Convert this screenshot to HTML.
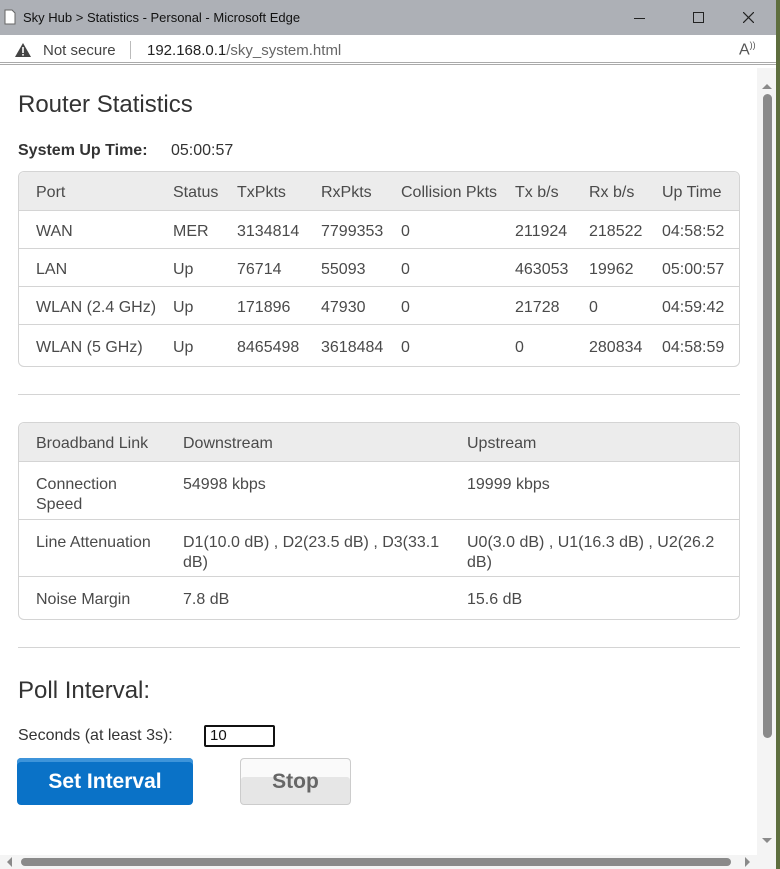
<!DOCTYPE html>
<html><head><style>
*{margin:0;padding:0;box-sizing:border-box}
body{width:780px;height:869px;overflow:hidden;background:#5e6e3e;font-family:"Liberation Sans",sans-serif;position:relative;color:#4a4a4a}
.win{position:absolute;left:0;top:0;width:776px;height:869px;background:#fff}
.title{position:absolute;left:0;top:0;width:776px;height:35px;background:#adb0b6;font-size:13px;color:#111}
.addr{position:absolute;left:0;top:35px;width:776px;height:30px;background:#fff;border-bottom:3px double #aaa}
.a{position:absolute}
table{border-collapse:separate;border-spacing:0;border:1px solid #d4d4d4;border-radius:6px;font-size:16px;color:#4a4a4a;position:absolute;left:18px;width:722px;table-layout:fixed}
td{padding:4px 0 0 0;border-top:1px solid #d4d4d4;vertical-align:middle;white-space:nowrap}
td:first-child{padding-left:17px}
tr:first-child td{border-top:none;background:#ececec}
tr:first-child td:first-child{border-top-left-radius:6px}
tr:first-child td:last-child{border-top-right-radius:6px}
.t2 td{white-space:normal}
.top td{vertical-align:top;padding-top:13px;line-height:20px}
hr{position:absolute;left:18px;width:722px;border:none;border-top:1px solid #d4d4d4}
</style></head><body>
<div class="win">
<div class="title">
<svg class="a" style="left:4px;top:9px" width="12" height="16"><path d="M1 1h7l3 3v11H1z" fill="#fff" stroke="#666"/></svg>
<span class="a" style="left:23px;top:10px">Sky Hub &gt; Statistics - Personal - Microsoft Edge</span>
<div class="a" style="left:634px;top:18px;width:11px;height:1px;background:#222"></div>
<div class="a" style="left:693px;top:12px;width:11px;height:11px;border:1px solid #222"></div>
<svg class="a" style="left:743px;top:12px" width="11" height="11"><path d="M0 0L11 11M11 0L0 11" stroke="#222" stroke-width="1.2"/></svg>
</div>
<div class="addr">
<svg class="a" style="left:14px;top:7px" width="18" height="16"><path d="M9 1L17 15H1z" fill="#444"/><rect x="8.2" y="5" width="1.6" height="6" fill="#fff"/><rect x="8.2" y="12" width="1.6" height="1.6" fill="#fff"/></svg>
<span class="a" style="left:43px;top:7px;font-size:15px;color:#444">Not secure</span>
<div class="a" style="left:130px;top:6px;width:1px;height:18px;background:#bbb"></div>
<span class="a" style="left:147px;top:7px;font-size:15px;color:#222">192.168.0.1<span style="color:#666">/sky_system.html</span></span>
<span class="a" style="left:739px;top:5px;font-size:16px;color:#555">A<sup style="font-size:9px">))</sup></span>
</div>
<div class="a" style="left:757px;top:68px;width:19px;height:790px;background:#f4f4f4"></div>
<div class="a" style="left:763px;top:94px;width:9px;height:644px;background:#8a8a8a;border-radius:5px"></div>
<div class="a" style="left:762px;top:79px;width:0;height:0;border:5px solid transparent;border-bottom-color:#8a8a8a"></div>
<div class="a" style="left:762px;top:838px;width:0;height:0;border:5px solid transparent;border-top-color:#8a8a8a"></div>
<div class="a" style="left:0;top:855px;width:776px;height:14px;background:#f4f4f4"></div>
<div class="a" style="left:21px;top:858px;width:710px;height:8px;background:#8a8a8a;border-radius:4px"></div>
<div class="a" style="left:2px;top:857px;border:5px solid transparent;border-right-color:#8a8a8a"></div>
<div class="a" style="left:745px;top:857px;border:5px solid transparent;border-left-color:#8a8a8a"></div>

<div class="a" style="left:18px;top:91px;font-size:24px;color:#333">Router Statistics</div>
<div class="a" style="left:18px;top:142px;font-size:16px;font-weight:bold;color:#333">System Up Time:</div>
<div class="a" style="left:171px;top:142px;font-size:16px;color:#333">05:00:57</div>

<table style="top:171px;height:195px">
<colgroup><col style="width:154px"><col style="width:64px"><col style="width:84px"><col style="width:80px"><col style="width:114px"><col style="width:74px"><col style="width:73px"><col></colgroup>
<tr style="height:38px"><td>Port</td><td>Status</td><td>TxPkts</td><td>RxPkts</td><td>Collision Pkts</td><td>Tx b/s</td><td>Rx b/s</td><td>Up Time</td></tr>
<tr style="height:38px"><td>WAN</td><td>MER</td><td>3134814</td><td>7799353</td><td>0</td><td>211924</td><td>218522</td><td>04:58:52</td></tr>
<tr style="height:38px"><td>LAN</td><td>Up</td><td>76714</td><td>55093</td><td>0</td><td>463053</td><td>19962</td><td>05:00:57</td></tr>
<tr style="height:38px"><td>WLAN (2.4 GHz)</td><td>Up</td><td>171896</td><td>47930</td><td>0</td><td>21728</td><td>0</td><td>04:59:42</td></tr>
<tr style="height:42px"><td>WLAN (5 GHz)</td><td>Up</td><td>8465498</td><td>3618484</td><td>0</td><td>0</td><td>280834</td><td>04:58:59</td></tr>
</table>
<hr style="top:394px">

<table class="t2" style="top:422px;height:197px">
<colgroup><col style="width:164px"><col style="width:284px"><col></colgroup>
<tr style="height:38px"><td>Broadband Link</td><td>Downstream</td><td>Upstream</td></tr>
<tr class="top" style="height:58px"><td>Connection<br>Speed</td><td>54998 kbps</td><td>19999 kbps</td></tr>
<tr class="top" style="height:57px"><td>Line Attenuation</td><td>D1(10.0 dB) , D2(23.5 dB) , D3(33.1 dB)</td><td>U0(3.0 dB) , U1(16.3 dB) , U2(26.2 dB)</td></tr>
<tr style="height:43px"><td>Noise Margin</td><td>7.8 dB</td><td>15.6 dB</td></tr>
</table>
<hr style="top:647px">

<div class="a" style="left:18px;top:677px;font-size:24px;color:#333">Poll Interval:</div>
<div class="a" style="left:18px;top:727px;font-size:16px;color:#333">Seconds (at least 3s):</div>
<div class="a" style="left:204px;top:725px;width:71px;height:22px;border:2px solid #111;border-radius:2px;font-size:15px;padding-left:4px;line-height:18px;color:#111">10</div>
<div class="a" style="left:17px;top:758px;width:176px;height:47px;background:#0a72c7;border-radius:4px;color:#fff;font-size:21px;font-weight:bold;text-align:center;line-height:47px;box-shadow:inset 0 4px 0 #3d94da">Set Interval</div>
<div class="a" style="left:240px;top:758px;width:111px;height:47px;background:#e6e6e6;border:1px solid #ccc;border-radius:4px;color:#666;font-size:21px;font-weight:bold;text-align:center;line-height:45px;box-shadow:inset 0 18px 0 #fafafa">Stop</div>
</div>
</body></html>
